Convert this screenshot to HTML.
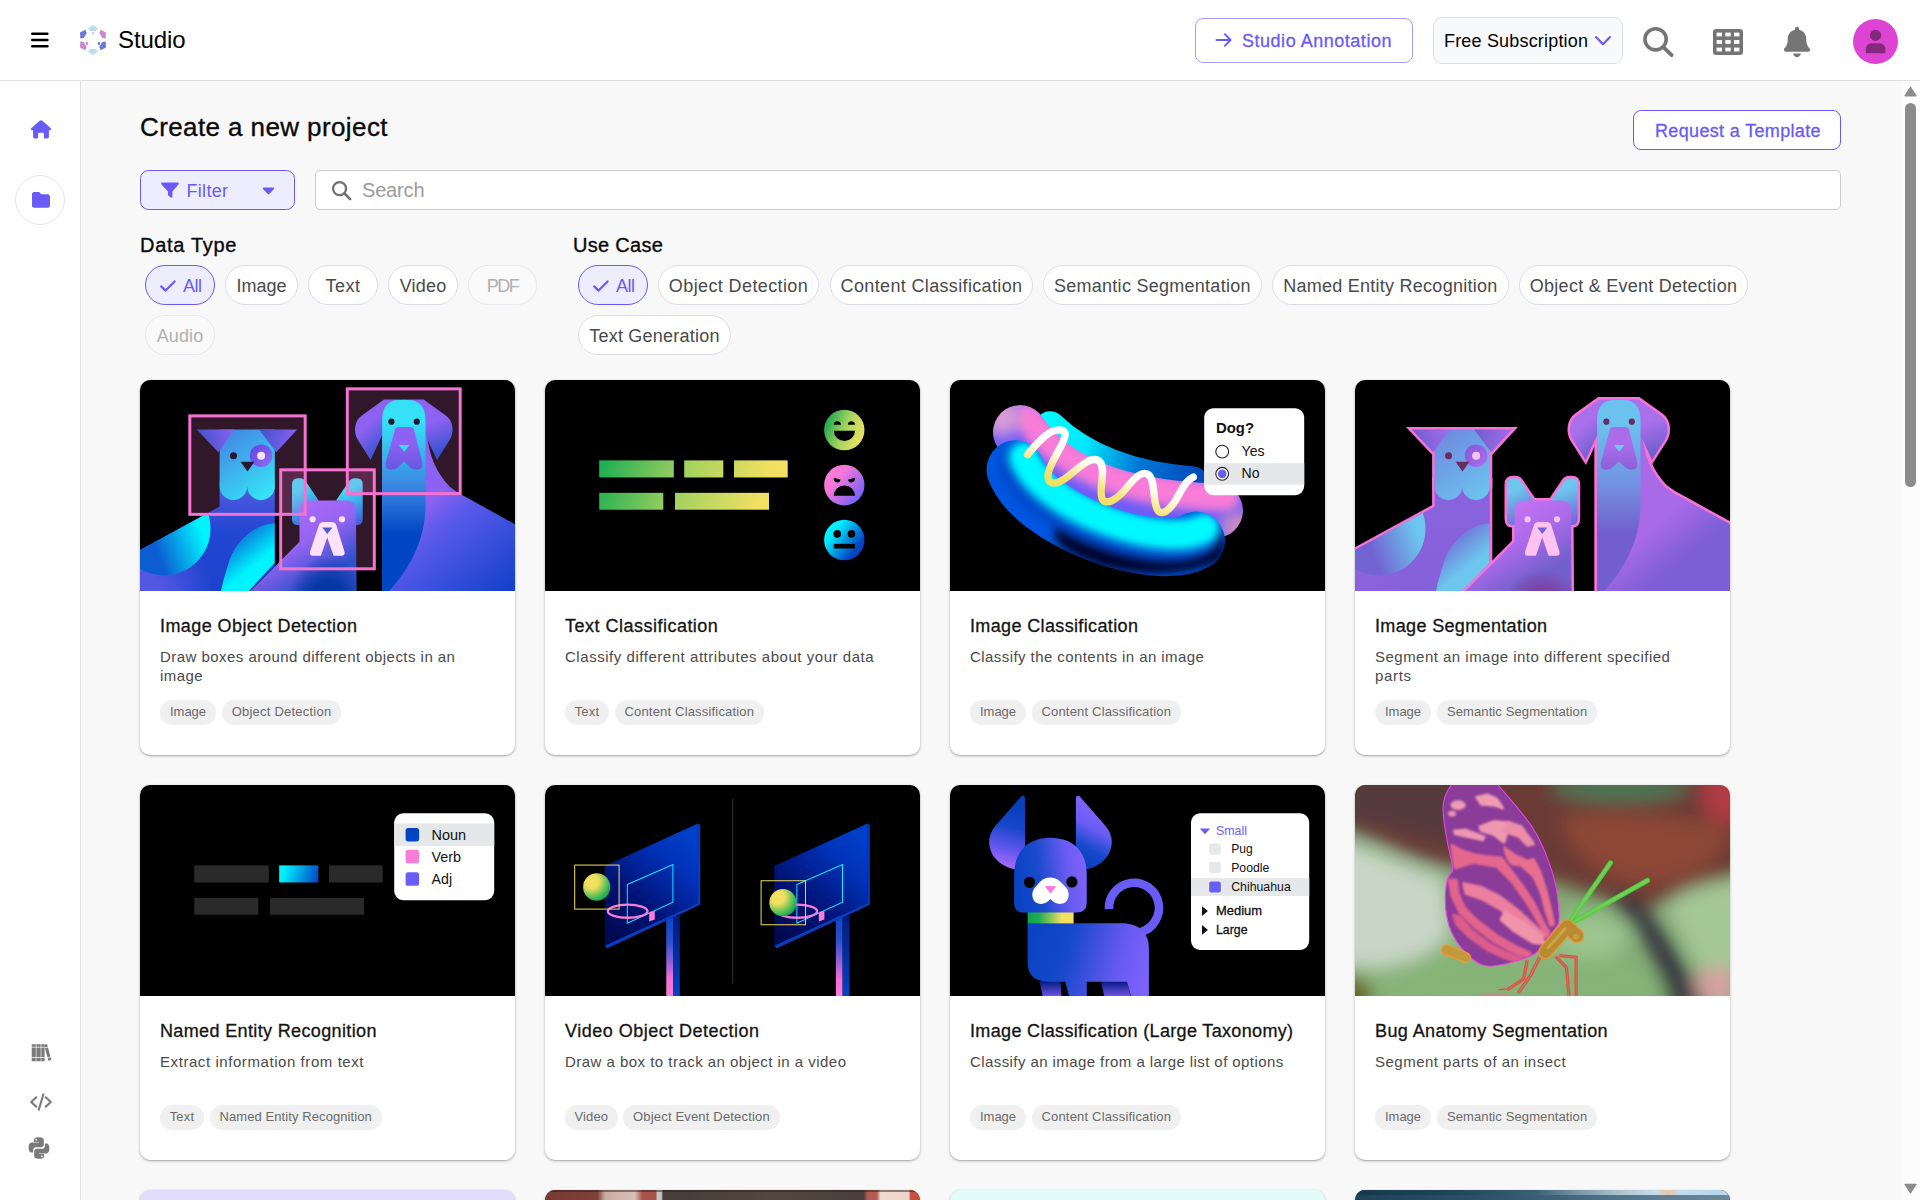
<!DOCTYPE html>
<html lang="en">
<head>
<meta charset="utf-8">
<title>Studio - Create a new project</title>
<style>
*{box-sizing:border-box;margin:0;padding:0}
html,body{width:1920px;height:1200px;overflow:hidden;background:#f8f8f8;font-family:"Liberation Sans",sans-serif;color:#111}
.abs{position:absolute}
.t{position:absolute;white-space:nowrap;line-height:1}
.med{-webkit-text-stroke:0.35px currentColor}
#hdr{position:absolute;left:0;top:0;width:1920px;height:81px;background:#fff;border-bottom:1px solid #e0e0e0;z-index:5}
#side{position:absolute;left:0;top:81px;width:81px;height:1119px;background:#fff;border-right:1px solid #e0e0e0;z-index:4}
#main{position:absolute;left:0;top:0;width:1920px;height:1200px;overflow:hidden}
.btn{position:absolute;border-radius:8px}
.chip{position:absolute;height:40px;border-radius:20px;border:1px solid #dcdce8;background:#fff;color:#4a4a4a;font-size:18px;line-height:40px;text-align:center;white-space:nowrap}
.chip.sel{border-color:#6a5af5;background:#eeedfe;color:#6a5af5}
.chip.dis{border-color:#e8e8ee;background:#fafafa;color:#b0b0b0}
.card{position:absolute;width:375px;height:375px;background:#fff;border-radius:10px;box-shadow:0 1px 3px rgba(0,0,0,.28),0 1px 1px rgba(0,0,0,.10);overflow:hidden}
.card svg.ill{position:absolute;left:0;top:0;width:375px;height:211px;display:block}
.card .ttl{position:absolute;left:20px;top:236px;font-size:18px;line-height:20px;color:#141414;white-space:nowrap;-webkit-text-stroke:0.3px currentColor}
.card .dsc{position:absolute;left:20px;top:267px;font-size:15px;line-height:19px;color:#4a4a4a;white-space:nowrap}
.card .tags{position:absolute;left:20px;top:320px;height:24.500px;white-space:nowrap;font-size:0}
.tag{display:inline-block;height:24.500px;line-height:24.500px;border-radius:12.250px;background:#f0f0f0;color:#6a6a6a;font-size:13px;margin-right:5.700px;text-align:center;vertical-align:top}
.pop text{font-family:"Liberation Sans",sans-serif}
</style>
</head>
<body>
<div id="main">
<!-- HEADER -->
<div id="hdr">
  <svg class="abs" style="left:30px;top:31px" width="20" height="18" viewBox="0 0 20 18"><g fill="#000"><rect x="1" y="1.6" width="17.6" height="2.4" rx="1.2"/><rect x="1" y="7.8" width="17.6" height="2.4" rx="1.2"/><rect x="1" y="14" width="17.6" height="2.4" rx="1.2"/></g></svg>
  <!-- logo -->
  <svg class="abs" style="left:78px;top:24px" width="30" height="32" viewBox="-15 -16 30 32">
    <g id="lg">
      <path d="M0,-15 L5,-11.8 L3,-9 L-3,-9 L-5,-11.8 Z" fill="#b9def2"/>
      <circle cx="0" cy="-6.6" r="1.3" fill="#b9def2"/>
    </g>
    <g transform="rotate(60)"><path d="M0,-15 L5,-11.8 L3,-9 L-3,-9 L-5,-11.8 Z" fill="#c98acd"/></g>
    <g transform="rotate(120)"><path d="M0,-15 L5,-11.8 L3,-9 L-3,-9 L-5,-11.8 Z" fill="#6b79d9"/><circle cx="0" cy="-6.9" r="1.4" fill="#6b79d9"/></g>
    <g transform="rotate(180)"><path d="M0,-15 L5,-11.8 L3,-9 L-3,-9 L-5,-11.8 Z" fill="#b9def2"/></g>
    <g transform="rotate(240)"><path d="M0,-15 L5,-11.8 L3,-9 L-3,-9 L-5,-11.8 Z" fill="#c98acd"/><circle cx="0" cy="-6.9" r="1.4" fill="#c98acd"/></g>
    <g transform="rotate(300)"><path d="M0,-15 L5,-11.8 L3,-9 L-3,-9 L-5,-11.8 Z" fill="#6b79d9"/></g>
  </svg>
  <span class="t" style="letter-spacing:-0.11px;left:118px;top:27.5px;font-size:24px;color:#000">Studio</span>

  <!-- Studio Annotation -->
  <div class="btn" style="left:1195px;top:18px;width:218px;height:45px;border:1px solid #a69df9;background:#fff"></div>
  <svg class="abs" style="left:1215px;top:32px" width="18" height="16" viewBox="0 0 18 16"><path d="M1.5 8 H15.5 M9.8 2.2 L15.6 8 L9.8 13.8" fill="none" stroke="#6a5af5" stroke-width="1.9" stroke-linecap="round" stroke-linejoin="round"/></svg>
  <span class="t" style="letter-spacing:0.52px;left:1242px;top:32px;font-size:18px;color:#6a5af5;-webkit-text-stroke:0.3px #6a5af5">Studio Annotation</span>

  <!-- Free Subscription -->
  <div class="btn" style="left:1433px;top:17px;width:190px;height:47px;border:1px solid #dedfe3;background:#f8f9fb;border-radius:9px"></div>
  <span class="t" style="letter-spacing:0.18px;left:1444px;top:32px;font-size:18px;color:#000">Free Subscription</span>
  <svg class="abs" style="left:1594px;top:34px" width="18" height="14" viewBox="0 0 18 14"><path d="M2 3 L9 10.2 L16 3" fill="none" stroke="#6a5af5" stroke-width="2.1" stroke-linecap="round" stroke-linejoin="round"/></svg>

  <!-- search -->
  <svg class="abs" style="left:1641px;top:25px" width="34" height="34" viewBox="0 0 34 34"><circle cx="14.6" cy="14.3" r="10.6" fill="none" stroke="#757575" stroke-width="3.6"/><path d="M22.6 22.4 L30.6 30.2" stroke="#757575" stroke-width="3.8" stroke-linecap="round"/></svg>
  <!-- grid -->
  <svg class="abs" style="left:1713px;top:29px" width="30" height="26" viewBox="0 0 30 26"><rect x="0" y="0" width="30" height="26" rx="3.2" fill="#757575"/><g fill="#fff"><rect x="3.6" y="3.6" width="5.4" height="3.8"/><rect x="12.3" y="3.6" width="5.4" height="3.8"/><rect x="21" y="3.6" width="5.4" height="3.8"/><rect x="3.6" y="11.1" width="5.4" height="3.8"/><rect x="12.3" y="11.1" width="5.4" height="3.8"/><rect x="21" y="11.1" width="5.4" height="3.8"/><rect x="3.6" y="18.6" width="5.4" height="3.8"/><rect x="12.3" y="18.6" width="5.4" height="3.8"/><rect x="21" y="18.6" width="5.4" height="3.8"/></g></svg>
  <!-- bell -->
  <svg class="abs" style="left:1783px;top:26px" width="28" height="32" viewBox="0 0 28 32"><path fill="#757575" d="M14 0.8c1.1 0 2 .9 2 2v.9c4.3.9 7.3 4.700 7.300 9.300v1.400c0 2.800 1 5.500 2.900 7.600l.5.500c.5.600.6 1.400.3 2.100s-1 1.100-1.800 1.100H2.800c-.8 0-1.500-.400-1.800-1.100s-.2-1.500.3-2.100l.5-.5c1.900-2.100 2.900-4.800 2.900-7.600V13c0-4.600 3-8.400 7.300-9.300v-.9c0-1.100.9-2 2-2zM17.800 27.600c-.1 2-1.800 3.600-3.800 3.600s-3.700-1.600-3.800-3.600z"/></svg>
  <!-- avatar -->
  <div class="abs" style="left:1853px;top:19px;width:45px;height:45px;border-radius:50%;background:#dd44d4"></div>
  <svg class="abs" style="left:1864px;top:29px" width="23" height="25" viewBox="0 0 23 25"><circle cx="11.6" cy="6.4" r="5.6" fill="#85297f"/><path d="M1.800 23.200v-3.200c0-3.200 2.600-5.800 5.800-5.800h8c3.200 0 5.800 2.600 5.800 5.800v3.200c0 .600-.4 1-1 1H2.800c-.6 0-1-.4-1-1z" fill="#85297f"/></svg>
</div>

<!-- SIDEBAR -->
<div id="side">
  <!-- home -->
  <svg class="abs" style="left:30px;top:39px" width="22" height="19" viewBox="0 0 22 19"><path fill="#6a5af8" d="M11 0.300c.5 0 1 .2 1.300.5l8.300 7.300c.6.500.6 1.300.1 1.800-.3.300-.6.400-1 .4h-.8v6.500c0 .9-.7 1.600-1.600 1.600h-2.600c-.5 0-.8-.4-.8-.8v-3.800c0-.6-.4-1-1-1h-3.800c-.6 0-1 .4-1 1v3.800c0 .5-.4.8-.8.8H4.700c-.9 0-1.600-.7-1.600-1.600v-6.500h-.8c-.8 0-1.300-.6-1.300-1.300 0-.4.200-.7.500-1L9.700.8c.4-.3.800-.5 1.300-.5z"/></svg>
  <!-- folder -->
  <div class="abs" style="left:15px;top:94px;width:50px;height:50px;border-radius:50%;border:1px solid #e3e3e3;background:#fff"></div>
  <svg class="abs" style="left:31px;top:110px" width="20" height="18" viewBox="0 0 20 18"><path fill="#6a5af8" d="M3 1h4.400c.7 0 1.300.3 1.700.8l.9 1.100c.2.200.4.300.7.300h6c1.300 0 2.300 1 2.300 2.300v8.900c0 1.300-1 2.300-2.300 2.300H3.300c-1.300 0-2.300-1-2.300-2.300V3.300C1 2 1.800 1 3 1z"/></svg>
  <!-- books -->
  <svg class="abs" style="left:31px;top:962px" width="20" height="20" viewBox="0 0 20 20"><g fill="#7a7a7a"><path d="M0.700 1.200h4.100v2.500H0.700zM0.700 4.500h4.100v9.800H0.700zM0.700 15.100h4.100v3.200H0.700z"/><path d="M5.400 1.200h4.300v2.500H5.400zM5.400 4.500h4.300v9.800H5.400zM5.400 15.100h4.300v3.200H5.400z"/><path d="M10.300 1.200h3.300v2.500h-3.300zM10.300 4.500h3.300v9.800h-3.300zM10.300 15.100h3.300v3.200h-3.300z"/><path d="M13.100 1.900l3-.8.700 2.600-3 .8zM14 5.300l3-.8 2.400 9-3 .8zM16.600 15.100l3-.8.700 2.700-3 .8z"/></g></svg>
  <!-- code -->
  <svg class="abs" style="left:28px;top:1010px" width="26" height="22" viewBox="0 0 26 22"><path d="M8.300 6.300 L3.200 11 L8.300 15.700 M17.700 6.300 L22.800 11 L17.700 15.700 M15.400 3.200 L10.800 18.800" fill="none" stroke="#7a7a7a" stroke-width="2.100" stroke-linecap="round" stroke-linejoin="round"/></svg>
  <!-- python -->
  <svg class="abs" style="left:27px;top:1055px" width="24" height="24" viewBox="0 0 24 24"><g fill="#7a7a7a"><path d="M11.900 1.200c-5.200 0-4.900 2.300-4.900 2.300v2.400h5v.7H5s-3.400-.4-3.400 4.900 2.900 5.100 2.900 5.100h1.700v-2.500s-.1-2.900 2.900-2.900h4.900s2.800 0 2.800-2.700V4s.4-2.800-4.900-2.800zM9.200 2.800c.5 0 .9.400.9.900s-.4.900-.9.900-.9-.4-.9-.9.400-.9.900-.9z"/><path d="M12.100 22.800c5.200 0 4.900-2.300 4.900-2.300v-2.400h-5v-.7h7s3.400.4 3.400-4.900-2.900-5.100-2.900-5.100h-1.700v2.500s.1 2.900-2.900 2.900H10s-2.800 0-2.800 2.700V20s-.4 2.800 4.900 2.800zM14.800 21.200c-.5 0-.9-.4-.9-.9s.4-.9.900-.9.900.4.900.9-.4.900-.9.900z"/></g></svg>
</div>

<!-- SCROLLBAR -->
<div class="abs" style="left:1901px;top:81px;width:19px;height:1119px;background:#fcfcfc;z-index:6"></div>
<svg class="abs" style="left:1901px;top:81px;z-index:7" width="19" height="1119" viewBox="0 0 19 1119">
  <path d="M9.500 5.200 L15.600 14.600 Q16 15.400 15 15.400 H4 Q3 15.400 3.400 14.600 Z" fill="#8b8b8b"/>
  <rect x="4" y="22" width="11" height="384" rx="5.500" fill="#8b8b8b"/>
  <path d="M9.500 1113 L15.600 1103.600 Q16 1102.800 15 1102.800 H4 Q3 1102.800 3.400 1103.600 Z" fill="#8b8b8b"/>
</svg>
<!-- TITLE ROW -->
<span class="t med" style="letter-spacing:0.4px;left:140px;top:114px;font-size:26px;color:#0a0a0a">Create a new project</span>
<div class="btn" style="left:1633px;top:110px;width:208px;height:40px;border:1px solid #6a5af5;background:#fff"></div>
<span class="t" style="letter-spacing:0.34px;left:1655px;top:122px;font-size:18px;color:#6a5af5;-webkit-text-stroke:0.3px #6a5af5">Request a Template</span>

<!-- FILTER + SEARCH -->
<div class="btn" style="left:140px;top:170px;width:155px;height:40px;border:1px solid #6a5af5;background:#eeedfe;border-radius:8.500px"></div>
<svg class="abs" style="left:161px;top:182px" width="18" height="16" viewBox="0 0 18 16"><path fill="#6a5af5" d="M1.200 0.600h15.600c.9 0 1.300 1 .8 1.700l-6.200 7.100v5.300c0 .8-.9 1.200-1.500.7l-2.500-2c-.3-.2-.4-.5-.4-.9V9.400L.4 2.300C-.1 1.600.3.600 1.200.6z"/></svg>
<span class="t" style="letter-spacing:0.3px;left:186.500px;top:182px;font-size:18px;color:#6a5af5">Filter</span>
<svg class="abs" style="left:262px;top:187px" width="13" height="8" viewBox="0 0 13 8"><path fill="#6a5af5" d="M1.600 0.500h9.800c.8 0 1.100.9.600 1.400L7.200 6.900c-.4.400-1 .4-1.400 0L1 1.900C.5 1.400.8.500 1.600.5z"/></svg>

<div class="abs" style="left:315px;top:170px;width:1526px;height:40px;border:1px solid #cbcbcb;background:#fff;border-radius:5px"></div>
<svg class="abs" style="left:331px;top:180px" width="21" height="21" viewBox="0 0 21 21"><circle cx="8.600" cy="8.600" r="6.500" fill="none" stroke="#6f6f6f" stroke-width="2.300"/><path d="M13.500 13.500 L19.200 19.200" stroke="#6f6f6f" stroke-width="2.500" stroke-linecap="round"/></svg>
<span class="t" style="letter-spacing:-0.17px;left:362px;top:180px;font-size:20px;color:#9c9c9c">Search</span>

<!-- DATA TYPE -->
<span class="t med" style="letter-spacing:0.71px;left:140px;top:235px;font-size:20px;color:#0a0a0a">Data Type</span>
<div class="chip sel" style="left:145px;top:265px;width:70px"></div>
<svg class="abs" style="left:159px;top:279px" width="18" height="14" viewBox="0 0 18 14"><path d="M2.200 7.400 L6.600 11.600 L15.600 2.400" fill="none" stroke="#6a5af5" stroke-width="2.200" stroke-linecap="round" stroke-linejoin="round"/></svg>
<span class="t" style="letter-spacing:-0.51px;left:183px;top:277px;font-size:18px;color:#6a5af5">All</span>
<div class="chip" style="left:225px;top:265px;width:73px"><span style="letter-spacing:-0.01px;">Image</span></div>
<div class="chip" style="left:308px;top:265px;width:70px"><span style="letter-spacing:0.49px;">Text</span></div>
<div class="chip" style="left:388px;top:265px;width:70px"><span style="letter-spacing:0.2px;">Video</span></div>
<div class="chip dis" style="left:468px;top:265px;width:69px"><span style="letter-spacing:-1.5px;">PDF</span></div>
<div class="chip dis" style="left:145px;top:315px;width:70px"><span style="letter-spacing:0.11px;">Audio</span></div>

<!-- USE CASE -->
<span class="t med" style="letter-spacing:0.31px;left:573px;top:235px;font-size:20px;color:#0a0a0a">Use Case</span>
<div class="chip sel" style="left:578px;top:265px;width:70px"></div>
<svg class="abs" style="left:592px;top:279px" width="18" height="14" viewBox="0 0 18 14"><path d="M2.200 7.400 L6.600 11.600 L15.600 2.400" fill="none" stroke="#6a5af5" stroke-width="2.200" stroke-linecap="round" stroke-linejoin="round"/></svg>
<span class="t" style="letter-spacing:-0.51px;left:616px;top:277px;font-size:18px;color:#6a5af5">All</span>
<div class="chip" style="left:658px;top:265px;width:161px"><span style="letter-spacing:0.39px;">Object Detection</span></div>
<div class="chip" style="left:830px;top:265px;width:203px"><span style="letter-spacing:0.35px;">Content Classification</span></div>
<div class="chip" style="left:1043px;top:265px;width:218.700px"><span style="letter-spacing:0.27px;">Semantic Segmentation</span></div>
<div class="chip" style="left:1272px;top:265px;width:236.700px"><span style="letter-spacing:0.26px;">Named Entity Recognition</span></div>
<div class="chip" style="left:1519px;top:265px;width:229px"><span style="letter-spacing:0.26px;">Object &amp; Event Detection</span></div>
<div class="chip" style="left:578px;top:315px;width:153px"><span style="letter-spacing:0.24px;">Text Generation</span></div>
<!-- CARD 1 -->
<div class="card" style="left:140px;top:380px">
<svg class="ill" viewBox="0 0 375 210" preserveAspectRatio="none"><rect width="375" height="210" fill="#000"/><defs>
<linearGradient id="alh" gradientUnits="userSpaceOnUse" x1="85" y1="55" x2="132" y2="118"><stop offset="0" stop-color="#4488e4"/><stop offset="1" stop-color="#34eaf9"/></linearGradient>
<linearGradient id="ale1" gradientUnits="userSpaceOnUse" x1="58" y1="60" x2="94" y2="50"><stop offset="0" stop-color="#3f52c8"/><stop offset="1" stop-color="#8b62f2"/></linearGradient>
<linearGradient id="ale2" gradientUnits="userSpaceOnUse" x1="120" y1="50" x2="156" y2="60"><stop offset="0" stop-color="#3f52c8"/><stop offset="1" stop-color="#8b62f2"/></linearGradient>
<linearGradient id="alb" gradientUnits="userSpaceOnUse" x1="100" y1="100" x2="100" y2="210"><stop offset="0" stop-color="#5c5ee2"/><stop offset="0.45" stop-color="#2247d2"/><stop offset="1" stop-color="#1c41cc"/></linearGradient>
<linearGradient id="alc" gradientUnits="userSpaceOnUse" x1="10" y1="180" x2="69" y2="158"><stop offset="0" stop-color="#0c5cd2"/><stop offset="0.15" stop-color="#0c5cd2"/><stop offset="0.93" stop-color="#00f4ff"/><stop offset="1" stop-color="#00f4ff"/></linearGradient>
<linearGradient id="all" gradientUnits="userSpaceOnUse" x1="95" y1="150" x2="126" y2="188"><stop offset="0" stop-color="#0c5cd2"/><stop offset="0.8" stop-color="#00f4ff"/><stop offset="1" stop-color="#00f4ff"/></linearGradient>
<linearGradient id="alr" gradientUnits="userSpaceOnUse" x1="112" y1="68" x2="130" y2="84"><stop offset="0" stop-color="#6248e6"/><stop offset="1" stop-color="#8d6af2"/></linearGradient>
<linearGradient id="ase1" gradientUnits="userSpaceOnUse" x1="154" y1="100" x2="176" y2="140"><stop offset="0" stop-color="#3fdcf6"/><stop offset="0.25" stop-color="#3fdcf6"/><stop offset="1" stop-color="#4560d8"/></linearGradient>
<linearGradient id="ase2" gradientUnits="userSpaceOnUse" x1="208" y1="100" x2="224" y2="140"><stop offset="0" stop-color="#3fdcf6"/><stop offset="0.2" stop-color="#3fdcf6"/><stop offset="1" stop-color="#4560d8"/></linearGradient>
<linearGradient id="asb" gradientUnits="userSpaceOnUse" x1="165" y1="122" x2="215" y2="205"><stop offset="0" stop-color="#ab6af8"/><stop offset="0.35" stop-color="#9464f2"/><stop offset="0.75" stop-color="#3350cc"/><stop offset="1" stop-color="#3350cc"/></linearGradient>
<radialGradient id="asd" gradientUnits="userSpaceOnUse" cx="188" cy="216" r="40"><stop offset="0" stop-color="#0638a4"/><stop offset="0.4" stop-color="#0638a4"/><stop offset="1" stop-color="#0638a400"/></radialGradient>
<linearGradient id="arh" gradientUnits="userSpaceOnUse" x1="260" y1="20" x2="260" y2="210"><stop offset="0" stop-color="#36e0f6"/><stop offset="0.12" stop-color="#36e0f6"/><stop offset="0.45" stop-color="#3a86e2"/><stop offset="0.7" stop-color="#0046c4"/><stop offset="1" stop-color="#0046c4"/></linearGradient>
<linearGradient id="are1" gradientUnits="userSpaceOnUse" x1="216" y1="40" x2="244" y2="70"><stop offset="0" stop-color="#8b62f2"/><stop offset="0.3" stop-color="#8b62f2"/><stop offset="1" stop-color="#3452cc"/></linearGradient>
<linearGradient id="are2" gradientUnits="userSpaceOnUse" x1="290" y1="28" x2="306" y2="72"><stop offset="0" stop-color="#8b62f2"/><stop offset="0.3" stop-color="#8b62f2"/><stop offset="1" stop-color="#3452cc"/></linearGradient>
<linearGradient id="arm" gradientUnits="userSpaceOnUse" x1="264" y1="47" x2="264" y2="90"><stop offset="0" stop-color="#8b62f2"/><stop offset="0.4" stop-color="#8b62f2"/><stop offset="1" stop-color="#6456e0"/></linearGradient>
<linearGradient id="arb" gradientUnits="userSpaceOnUse" x1="288" y1="100" x2="375" y2="205"><stop offset="0" stop-color="#8c62f2"/><stop offset="0.12" stop-color="#8c62f2"/><stop offset="0.32" stop-color="#5c5aea"/><stop offset="0.62" stop-color="#3a50dc"/><stop offset="1" stop-color="#1440cc"/></linearGradient>
<radialGradient id="albo" gradientUnits="userSpaceOnUse" cx="-5" cy="218" r="80"><stop offset="0" stop-color="#5258e2"/><stop offset="0.35" stop-color="#5258e2"/><stop offset="1" stop-color="#5258e200"/></radialGradient>
<clipPath id="albc"><path d="M0,169.3 L79.6,126 L79.6,100 L134.8,100 L134.8,185.5 L110.3,210 L0,210 Z"/></clipPath>
<clipPath id="asbc"><path d="M159.5,131 Q159.5,120 170.5,120 L205,120 Q216,120 216,131 L216.5,210 L110.5,210 L159.5,161 Z"/></clipPath>
</defs><rect x="140.7" y="89.4" width="93.6" height="98.5" fill="rgba(244,114,208,0.2)"/><path d="M152,104 Q152,97.800 158,97.800 L160.5,97.800 Q163.6,97.800 165.3,100.3 L178,119 L178,144.5 L158.5,144.5 Q152,144.5 152,138 Z" fill="url(#ase1)"/><path d="M222.7,104 Q222.7,97.800 216.7,97.800 L214.2,97.800 Q211.1,97.800 209.4,100.3 L196.7,119 L196.7,144.5 L216.2,144.5 Q222.7,144.5 222.7,138 Z" fill="url(#ase2)"/>
<path d="M159.5,131 Q159.5,120 170.5,120 L205,120 Q216,120 216,131 L216.5,210 L110.5,210 L159.5,161 Z" fill="url(#asb)"/>
<g clip-path="url(#asbc)"><circle cx="188" cy="216" r="40" fill="url(#asd)"/></g>
<path d="M183.5,141.4 L191.7,141.4 Q195.5,141.4 196.5,145 L204.5,171 Q205.3,175 201.5,175 L193.6,175 L187.2,156.7 L180.9,175 L173,175 Q169.2,175 170,171 L178.7,145 Q179.7,141.4 183.5,141.4 Z" fill="#fde2fa"/>
<path d="M182.3,146.7 L192.4,146.7 L187.3,153.2 Z" fill="#4a58d8"/>
<circle cx="172.6" cy="138.6" r="3.1" fill="#fde2fa"/><circle cx="202" cy="138.6" r="3.1" fill="#fde2fa"/><rect x="49.8" y="35.7" width="115.4" height="98" fill="rgba(244,114,208,0.2)"/><path d="M0,169.3 L79.6,126 L79.6,100 L134.8,100 L134.8,185.5 L110.3,210 L0,210 Z" fill="url(#alb)"/>
<g clip-path="url(#albc)"><circle cx="-5" cy="218" r="80" fill="url(#albo)"/><circle cx="24" cy="148" r="46.5" fill="url(#alc)"/><path d="M134.8,142.5 C115,143 97,160 90,178 C86,190 83,200 81,210 L108.8,210 L134.8,181.8 Z" fill="url(#all)"/></g>
<path d="M79.6,49.2 H134.8 V105.8 A13.8,13.8 0 0 1 107.2,105.8 A13.8,13.8 0 0 1 79.6,105.8 Z" fill="url(#alh)"/>
<path d="M56.7,49.2 L94.2,49.2 L78.3,72 Z" fill="url(#ale1)"/><path d="M119,49.2 L157.2,49.2 L136.2,72 Z" fill="url(#ale2)"/>
<circle cx="121.1" cy="75.4" r="11.3" fill="url(#alr)"/><circle cx="121.1" cy="75.4" r="4" fill="#fde2fa"/>
<circle cx="93.5" cy="75.4" r="3.5" fill="#2b1631"/><path d="M100.6,81.4 L114.4,81.4 L107.5,91 Z" fill="#2b1631"/><rect x="207.3" y="8.8" width="112.9" height="104.3" fill="rgba(244,114,208,0.2)"/><path d="M242,58 L287,54 C289,75 296,92 310,106.5 Q318,113 327.6,117.5 L375,143.5 L375,210 L242,210 Z" fill="url(#arb)"/>
<path d="M264,19.5 L244,19.5 L221.5,35.5 C214,41 213.5,52 217.5,59 L230.6,79.5 L242.1,55 L264,40 Z" fill="url(#are1)"/><path d="M263,19.5 L283.6,19.5 L306.1,35.5 C313.6,41 314.1,52 310.1,59 L297,79.5 L285.5,55 L263,40 Z" fill="url(#are2)"/>
<path d="M242.1,40 C242.1,26 249,20 259,20 L268.6,20 C278.6,20 285.5,26 285.5,40 L285.5,125 C285.5,160 268,190 248.8,210 L242.1,210 Z" fill="url(#arh)"/>
<path d="M258.5,46.9 L270.5,46.9 Q273.5,46.9 274.2,50 L282.3,82 Q283.5,88.5 277.5,89.3 Q273,89.5 270.5,87 L264,81 L257.5,87 Q255,89.5 250.5,89.3 Q244.5,88.5 245.8,82 L254.8,50 Q255.5,46.9 258.5,46.9 Z" fill="url(#arm)"/>
<path d="M258.9,64.8 L269.4,64.800 L264.2,71.4 Z" fill="#2fe2f8"/>
<circle cx="251.4" cy="41.5" r="3.1" fill="#2b1631"/><circle cx="276.800" cy="41.5" r="3.1" fill="#2b1631"/><g fill="none" stroke="#f472d0" stroke-width="3"><rect x="49.8" y="35.7" width="115.4" height="98"/><rect x="207.3" y="8.8" width="112.9" height="104.3"/><rect x="140.7" y="89.4" width="93.6" height="98.5"/></g></svg>
<span class="ttl" style="letter-spacing:0.42px;">Image Object Detection</span>
<span class="dsc" style="letter-spacing:0.46px;top:267px">Draw boxes around different objects in an</span>
<span class="dsc" style="letter-spacing:0.41px;top:286px">image</span>
<div class="tags"><span class="tag" style="width:56px"><span style="letter-spacing:-0.04px;">Image</span></span><span class="tag" style="width:119.7px"><span style="letter-spacing:0.23px;">Object Detection</span></span></div>
</div>
<!-- CARD 2 -->
<div class="card" style="left:545px;top:380px">
<svg class="ill" viewBox="0 0 375 210" preserveAspectRatio="none"><rect width="375" height="210" fill="#000"/><defs><linearGradient id="b_g" gradientUnits="userSpaceOnUse" x1="54" y1="75" x2="243" y2="135"><stop offset="0" stop-color="#18ac52"/><stop offset="0.45" stop-color="#a6d260"/><stop offset="0.85" stop-color="#f2e062"/><stop offset="1" stop-color="#f2e062"/></linearGradient><linearGradient id="b_e1" gradientUnits="userSpaceOnUse" x1="279" y1="42" x2="320" y2="58"><stop offset="0" stop-color="#14a650"/><stop offset="0.5" stop-color="#a6d460"/><stop offset="1" stop-color="#f6e464"/></linearGradient><linearGradient id="b_e2" gradientUnits="userSpaceOnUse" x1="284" y1="92" x2="316" y2="118"><stop offset="0" stop-color="#fa7ada"/><stop offset="0.25" stop-color="#f878d8"/><stop offset="1" stop-color="#7060fa"/></linearGradient><linearGradient id="b_e3" gradientUnits="userSpaceOnUse" x1="283" y1="146" x2="316" y2="172"><stop offset="0" stop-color="#00f6ff"/><stop offset="0.2" stop-color="#00eaff"/><stop offset="0.85" stop-color="#0044c4"/><stop offset="1" stop-color="#0040c0"/></linearGradient></defs><g fill="url(#b_g)"><rect x="54.2" y="80" width="74.6" height="17"/><rect x="139.2" y="80" width="39.1" height="17"/><rect x="189" y="80" width="53.7" height="17"/><rect x="54.2" y="112.3" width="64.1" height="16.8"/><rect x="130" y="112.3" width="94" height="16.8"/></g><circle cx="299.3" cy="49.8" r="20.2" fill="url(#b_e1)"/><path d="M288.7,44.6 a3.6,3.6 0 0 1 7.2,0 Z M302.8,44.6 a3.6,3.6 0 0 1 7.2,0 Z M288.8,50.6 h21.2 a10.6,10 0 0 1 -21.2,0 Z" fill="#000"/><circle cx="299.3" cy="104.6" r="20.2" fill="url(#b_e2)"/><path d="M288.9,97.4 L295.7,99.3 a3.500,3.500 0 0 1 -6.800,-1.900 Z M309.7,97.4 L302.9,99.3 a3.500,3.500 0 0 0 6.800,-1.900 Z M288.8,115.3 a10.6,10.300 0 0 1 21.2,0 Z" fill="#000"/><circle cx="299.3" cy="159.3" r="20.2" fill="url(#b_e3)"/><circle cx="292.2" cy="153.2" r="3.800" fill="#000"/><circle cx="306.4" cy="153.2" r="3.800" fill="#000"/><rect x="288.8" y="163.1" width="21.2" height="4.600" fill="#000"/></svg>
<span class="ttl" style="letter-spacing:0.49px;">Text Classification</span>
<span class="dsc" style="letter-spacing:0.54px;top:267px">Classify different attributes about your data</span>
<div class="tags"><span class="tag" style="width:44px"><span style="letter-spacing:0.22px;">Text</span></span><span class="tag" style="width:149.3px"><span style="letter-spacing:0.18px;">Content Classification</span></span></div>
</div>
<!-- CARD 3 -->
<div class="card" style="left:950px;top:380px">
<svg class="ill" viewBox="0 0 375 210" preserveAspectRatio="none"><rect width="375" height="210" fill="#000"/><defs><linearGradient id="c_bk" gradientUnits="userSpaceOnUse" x1="95" y1="60" x2="250" y2="100"><stop offset="0" stop-color="#00f8ff"/><stop offset="0.25" stop-color="#00e8fa"/><stop offset="0.6" stop-color="#0078d8"/><stop offset="1" stop-color="#0048b8"/></linearGradient><linearGradient id="c_ms" gradientUnits="userSpaceOnUse" x1="141.9" y1="120.5" x2="158.1" y2="79.5"><stop offset="0" stop-color="#f2de62"/><stop offset="0.3" stop-color="#f3e274"/><stop offset="0.72" stop-color="#fffcee"/><stop offset="1" stop-color="#ffffff"/></linearGradient><filter id="c_b3" filterUnits="userSpaceOnUse" x="-20" y="-20" width="415" height="250"><feGaussianBlur stdDeviation="3"/></filter><filter id="c_b5" filterUnits="userSpaceOnUse" x="-20" y="-20" width="415" height="250"><feGaussianBlur stdDeviation="5"/></filter><filter id="c_b7" filterUnits="userSpaceOnUse" x="-20" y="-20" width="415" height="250"><feGaussianBlur stdDeviation="7"/></filter><mask id="c_sm" maskUnits="userSpaceOnUse" x="0" y="0" width="375" height="210"><path d="M70,52 Q120,125 266,130" fill="none" stroke="#fff" stroke-width="54" stroke-linecap="round"/></mask><mask id="c_fm" maskUnits="userSpaceOnUse" x="0" y="0" width="375" height="210"><path d="M65.5,89 C84,139.5 204.5,182.8 246,160" fill="none" stroke="#fff" stroke-width="58" stroke-linecap="round"/></mask></defs><path d="M100,46 Q150,94 243,101" fill="none" stroke="url(#c_bk)" stroke-width="30" stroke-linecap="round"/><g mask="url(#c_sm)"><rect width="375" height="210" fill="#6c5cf6"/><path d="M70,52 Q120,125 266,130" fill="none" stroke="#f87cd8" stroke-width="30" stroke-linecap="round" transform="translate(9,-14)" filter="url(#c_b5)"/><circle cx="52" cy="36" r="20" fill="#d69ad8" filter="url(#c_b7)"/><circle cx="288" cy="148" r="18" fill="#c88ac8" filter="url(#c_b7)"/></g><g mask="url(#c_fm)"><rect width="375" height="210" fill="#0056e0"/><path d="M118,148 C150,170 205,178 250,162" fill="none" stroke="#000620" stroke-width="38" stroke-linecap="round" transform="translate(6,3)" filter="url(#c_b5)"/><path d="M65.5,89 C84,139.5 204.5,182.8 246,160" fill="none" stroke="#0046c8" stroke-width="40" stroke-linecap="round" transform="translate(3,-5)" filter="url(#c_b5)"/><path d="M65.5,89 C84,139.5 204.5,182.8 246,160" fill="none" stroke="#00f8ff" stroke-width="30" stroke-linecap="round" transform="translate(8,-12)" filter="url(#c_b5)"/><path d="M65.5,89 C84,139.5 204.5,182.8 246,160" fill="none" stroke="#00f8ff" stroke-width="18" stroke-linecap="round" transform="translate(9,-14)" filter="url(#c_b3)"/></g><path d="M77.5,74.2 C88,62 100,47 112,50 C124,53 98,82 98,95 C98,106 108,104 118,96 C128,88 140,76 148,80 C158,85 148,108 152,118 C156,126 168,118 176,108 C184,98 192,90 198,94 C206,99 202,122 208,130 C214,137 224,124 230,112 C235,103 238,99 243.3,96.7" fill="none" stroke="url(#c_ms)" stroke-width="7.400" stroke-linecap="round" stroke-linejoin="round"/><g class="pop"><rect x="254.2" y="28.1" width="100" height="86.5" rx="9" fill="#fff"/><rect x="254.2" y="82.800" width="100" height="21.400" fill="#e6e7e9"/><text x="266" y="52.6" font-size="15.500" font-weight="bold" fill="#111" textLength="38" lengthAdjust="spacingAndGlyphs">Dog?</text><circle cx="272.2" cy="71.3" r="6.400" fill="#fff" stroke="#222" stroke-width="1.100"/><circle cx="272.2" cy="93.4" r="6.400" fill="#fff" stroke="#222" stroke-width="1.100"/><circle cx="272.2" cy="93.4" r="4.300" fill="#6a5cf6"/><text x="291.6" y="75.6" font-size="14" fill="#111" textLength="23" lengthAdjust="spacingAndGlyphs">Yes</text><text x="291.6" y="98" font-size="14" fill="#111" textLength="18" lengthAdjust="spacingAndGlyphs">No</text></g></svg>
<span class="ttl" style="letter-spacing:0.36px;">Image Classification</span>
<span class="dsc" style="letter-spacing:0.43px;top:267px">Classify the contents in an image</span>
<div class="tags"><span class="tag" style="width:56px"><span style="letter-spacing:-0.04px;">Image</span></span><span class="tag" style="width:149.3px"><span style="letter-spacing:0.18px;">Content Classification</span></span></div>
</div>
<!-- CARD 4 -->
<div class="card" style="left:1355px;top:380px">
<svg class="ill" viewBox="0 0 375 210" preserveAspectRatio="none"><rect width="375" height="210" fill="#000"/><defs>
<linearGradient id="dlh" gradientUnits="userSpaceOnUse" x1="85" y1="55" x2="132" y2="118"><stop offset="0" stop-color="#6f8ae0"/><stop offset="1" stop-color="#6cc6ee"/></linearGradient>
<linearGradient id="dle1" gradientUnits="userSpaceOnUse" x1="58" y1="60" x2="94" y2="50"><stop offset="0" stop-color="#6e5ecd"/><stop offset="1" stop-color="#a46cea"/></linearGradient>
<linearGradient id="dle2" gradientUnits="userSpaceOnUse" x1="120" y1="50" x2="156" y2="60"><stop offset="0" stop-color="#6e5ecd"/><stop offset="1" stop-color="#a46cea"/></linearGradient>
<linearGradient id="dlb" gradientUnits="userSpaceOnUse" x1="100" y1="100" x2="100" y2="210"><stop offset="0" stop-color="#8a64de"/><stop offset="0.45" stop-color="#8862dc"/><stop offset="1" stop-color="#8460d8"/></linearGradient>
<linearGradient id="dlc" gradientUnits="userSpaceOnUse" x1="10" y1="180" x2="69" y2="158"><stop offset="0" stop-color="#7262d2"/><stop offset="0.15" stop-color="#7262d2"/><stop offset="0.93" stop-color="#6cc6ee"/><stop offset="1" stop-color="#6cc6ee"/></linearGradient>
<linearGradient id="dll" gradientUnits="userSpaceOnUse" x1="95" y1="150" x2="126" y2="188"><stop offset="0" stop-color="#7262d2"/><stop offset="0.8" stop-color="#6cc6ee"/><stop offset="1" stop-color="#6cc6ee"/></linearGradient>
<linearGradient id="dlr" gradientUnits="userSpaceOnUse" x1="112" y1="68" x2="130" y2="84"><stop offset="0" stop-color="#8a58dc"/><stop offset="1" stop-color="#a870ea"/></linearGradient>
<linearGradient id="dse1" gradientUnits="userSpaceOnUse" x1="154" y1="100" x2="176" y2="140"><stop offset="0" stop-color="#6cc6ee"/><stop offset="0.25" stop-color="#6cc6ee"/><stop offset="1" stop-color="#7266d6"/></linearGradient>
<linearGradient id="dse2" gradientUnits="userSpaceOnUse" x1="208" y1="100" x2="224" y2="140"><stop offset="0" stop-color="#6cc6ee"/><stop offset="0.2" stop-color="#6cc6ee"/><stop offset="1" stop-color="#7266d6"/></linearGradient>
<linearGradient id="dsb" gradientUnits="userSpaceOnUse" x1="165" y1="122" x2="215" y2="205"><stop offset="0" stop-color="#c272f2"/><stop offset="0.35" stop-color="#ac6aea"/><stop offset="0.75" stop-color="#7260cc"/><stop offset="1" stop-color="#7260cc"/></linearGradient>
<radialGradient id="dsd" gradientUnits="userSpaceOnUse" cx="188" cy="228" r="40"><stop offset="0" stop-color="#7a3e9e"/><stop offset="0.4" stop-color="#7a3e9e"/><stop offset="1" stop-color="#7a3e9e00"/></radialGradient>
<linearGradient id="drh" gradientUnits="userSpaceOnUse" x1="260" y1="20" x2="260" y2="210"><stop offset="0" stop-color="#6cc2ee"/><stop offset="0.12" stop-color="#6cc2ee"/><stop offset="0.45" stop-color="#7290e0"/><stop offset="0.7" stop-color="#725ecc"/><stop offset="1" stop-color="#725ecc"/></linearGradient>
<linearGradient id="dre1" gradientUnits="userSpaceOnUse" x1="216" y1="40" x2="244" y2="70"><stop offset="0" stop-color="#aa70ec"/><stop offset="0.3" stop-color="#aa70ec"/><stop offset="1" stop-color="#6e5ece"/></linearGradient>
<linearGradient id="dre2" gradientUnits="userSpaceOnUse" x1="290" y1="28" x2="306" y2="72"><stop offset="0" stop-color="#aa70ec"/><stop offset="0.3" stop-color="#aa70ec"/><stop offset="1" stop-color="#6e5ece"/></linearGradient>
<linearGradient id="drm" gradientUnits="userSpaceOnUse" x1="264" y1="47" x2="264" y2="90"><stop offset="0" stop-color="#aa6cea"/><stop offset="0.4" stop-color="#aa6cea"/><stop offset="1" stop-color="#8a60d8"/></linearGradient>
<linearGradient id="drb" gradientUnits="userSpaceOnUse" x1="288" y1="100" x2="375" y2="205"><stop offset="0" stop-color="#a86ae6"/><stop offset="0.12" stop-color="#a86ae6"/><stop offset="0.32" stop-color="#a86ae6"/><stop offset="0.62" stop-color="#7e5ed6"/><stop offset="1" stop-color="#7e5ed6"/></linearGradient>
<radialGradient id="dlbo" gradientUnits="userSpaceOnUse" cx="-5" cy="218" r="80"><stop offset="0" stop-color="#8a62dc"/><stop offset="0.35" stop-color="#8a62dc"/><stop offset="1" stop-color="#8a62dc00"/></radialGradient>
<clipPath id="dlbc"><path d="M0,169.3 L79.6,126 L79.6,100 L134.8,100 L134.8,185.5 L110.3,210 L0,210 Z"/></clipPath>
<clipPath id="dsbc"><path d="M159.5,131 Q159.5,120 170.5,120 L205,120 Q216,120 216,131 L216.5,210 L110.5,210 L159.5,161 Z"/></clipPath>
</defs><g fill="#f872d8" stroke="#f872d8" stroke-width="5" stroke-linejoin="miter" stroke-miterlimit="5"><path d="M0,169.3 L79.6,126 L79.6,100 L134.8,100 L134.8,185.5 L110.3,210 L0,210 Z"/><path d="M79.6,49.2 H134.8 V105.8 A13.8,13.8 0 0 1 107.2,105.8 A13.8,13.8 0 0 1 79.6,105.8 Z"/><path d="M56.7,49.2 L94.2,49.2 L78.3,72 Z"/><path d="M119,49.2 L157.2,49.2 L136.2,72 Z"/></g>
<path d="M0,169.3 L79.6,126 L79.6,100 L134.8,100 L134.8,185.5 L110.3,210 L0,210 Z" fill="url(#dlb)"/>
<g clip-path="url(#dlbc)"><circle cx="-5" cy="218" r="80" fill="url(#dlbo)"/><circle cx="24" cy="148" r="46.5" fill="url(#dlc)"/><path d="M134.8,142.5 C115,143 97,160 90,178 C86,190 83,200 81,210 L108.8,210 L134.8,181.8 Z" fill="url(#dll)"/></g>
<path d="M79.6,49.2 H134.8 V105.8 A13.8,13.8 0 0 1 107.2,105.8 A13.8,13.8 0 0 1 79.6,105.8 Z" fill="url(#dlh)"/>
<path d="M56.7,49.2 L94.2,49.2 L78.3,72 Z" fill="url(#dle1)"/><path d="M119,49.2 L157.2,49.2 L136.2,72 Z" fill="url(#dle2)"/>
<circle cx="121.1" cy="75.4" r="11.3" fill="url(#dlr)"/><circle cx="121.1" cy="75.4" r="4" fill="#fcc2f0"/>
<circle cx="93.5" cy="75.4" r="3.5" fill="#6b2a62"/><path d="M100.6,81.4 L114.4,81.4 L107.5,91 Z" fill="#6b2a62"/><g fill="#f872d8" stroke="#f872d8" stroke-width="5" stroke-linejoin="miter" stroke-miterlimit="5"><path d="M242,58 L287,54 C289,75 296,92 310,106.5 Q318,113 327.6,117.5 L375,143.5 L375,210 L242,210 Z"/><path d="M242.1,40 C242.1,26 249,20 259,20 L268.6,20 C278.6,20 285.5,26 285.5,40 L285.5,125 C285.5,160 268,190 248.8,210 L242.1,210 Z"/><path d="M264,19.5 L244,19.5 L221.5,35.5 C214,41 213.5,52 217.5,59 L230.6,79.5 L242.1,55 L264,40 Z"/><path d="M263,19.5 L283.6,19.5 L306.1,35.5 C313.6,41 314.1,52 310.1,59 L297,79.5 L285.5,55 L263,40 Z"/></g>
<path d="M242,58 L287,54 C289,75 296,92 310,106.5 Q318,113 327.6,117.5 L375,143.5 L375,210 L242,210 Z" fill="url(#drb)"/>
<path d="M264,19.5 L244,19.5 L221.5,35.5 C214,41 213.5,52 217.5,59 L230.6,79.5 L242.1,55 L264,40 Z" fill="url(#dre1)"/><path d="M263,19.5 L283.6,19.5 L306.1,35.5 C313.6,41 314.1,52 310.1,59 L297,79.5 L285.5,55 L263,40 Z" fill="url(#dre2)"/>
<path d="M242.1,40 C242.1,26 249,20 259,20 L268.6,20 C278.6,20 285.5,26 285.5,40 L285.5,125 C285.5,160 268,190 248.8,210 L242.1,210 Z" fill="url(#drh)"/>
<path d="M258.5,46.9 L270.5,46.9 Q273.5,46.9 274.2,50 L282.3,82 Q283.5,88.5 277.5,89.3 Q273,89.5 270.5,87 L264,81 L257.5,87 Q255,89.5 250.5,89.3 Q244.5,88.5 245.8,82 L254.8,50 Q255.5,46.9 258.5,46.9 Z" fill="url(#drm)"/>
<path d="M258.9,64.8 L269.4,64.800 L264.2,71.4 Z" fill="#6ccaf0"/>
<circle cx="251.4" cy="41.5" r="3.1" fill="#6b2a62"/><circle cx="276.800" cy="41.5" r="3.1" fill="#6b2a62"/><g fill="#f872d8" stroke="#f872d8" stroke-width="5" stroke-linejoin="miter" stroke-miterlimit="5"><path d="M159.5,131 Q159.5,120 170.5,120 L205,120 Q216,120 216,131 L216.5,210 L110.5,210 L159.5,161 Z"/><path d="M152,104 Q152,97.800 158,97.800 L160.5,97.800 Q163.6,97.800 165.3,100.3 L178,119 L178,144.5 L158.5,144.5 Q152,144.5 152,138 Z"/><path d="M222.7,104 Q222.7,97.800 216.7,97.800 L214.2,97.800 Q211.1,97.800 209.4,100.3 L196.7,119 L196.7,144.5 L216.2,144.5 Q222.7,144.5 222.7,138 Z"/></g>
<path d="M152,104 Q152,97.800 158,97.800 L160.5,97.800 Q163.6,97.800 165.3,100.3 L178,119 L178,144.5 L158.5,144.5 Q152,144.5 152,138 Z" fill="url(#dse1)"/><path d="M222.7,104 Q222.7,97.800 216.7,97.800 L214.2,97.800 Q211.1,97.800 209.4,100.3 L196.7,119 L196.7,144.5 L216.2,144.5 Q222.7,144.5 222.7,138 Z" fill="url(#dse2)"/>
<path d="M159.5,131 Q159.5,120 170.5,120 L205,120 Q216,120 216,131 L216.5,210 L110.5,210 L159.5,161 Z" fill="url(#dsb)"/>
<g clip-path="url(#dsbc)"><circle cx="188" cy="228" r="40" fill="url(#dsd)"/></g>
<path d="M183.5,141.4 L191.7,141.4 Q195.5,141.4 196.5,145 L204.5,171 Q205.3,175 201.5,175 L193.6,175 L187.2,156.7 L180.9,175 L173,175 Q169.2,175 170,171 L178.7,145 Q179.7,141.4 183.5,141.4 Z" fill="#fcc2f0"/>
<path d="M182.3,146.7 L192.4,146.7 L187.3,153.2 Z" fill="#7462d6"/>
<circle cx="172.6" cy="138.6" r="3.1" fill="#fcc2f0"/><circle cx="202" cy="138.6" r="3.1" fill="#fcc2f0"/></svg>
<span class="ttl" style="letter-spacing:0.35px;">Image Segmentation</span>
<span class="dsc" style="letter-spacing:0.48px;top:267px">Segment an image into different specified</span>
<span class="dsc" style="letter-spacing:0.66px;top:286px">parts</span>
<div class="tags"><span class="tag" style="width:56px"><span style="letter-spacing:-0.04px;">Image</span></span><span class="tag" style="width:160.8px"><span style="letter-spacing:0.11px;">Semantic Segmentation</span></span></div>
</div>
<!-- CARD 5 -->
<div class="card" style="left:140px;top:785px">
<svg class="ill" viewBox="0 0 375 210" preserveAspectRatio="none"><rect width="375" height="210" fill="#000"/><defs><linearGradient id="e_g" gradientUnits="userSpaceOnUse" x1="139" y1="82" x2="178" y2="95"><stop offset="0" stop-color="#00f8ff"/><stop offset="0.15" stop-color="#00eeff"/><stop offset="1" stop-color="#0046c6"/></linearGradient></defs><g fill="#2a2a2a"><rect x="54.2" y="80" width="74.6" height="17"/><rect x="189" y="80" width="53.7" height="17"/><rect x="54.2" y="112.3" width="64.1" height="16.8"/><rect x="130" y="112.3" width="94" height="16.8"/></g><rect x="139.2" y="80" width="39.1" height="17" fill="url(#e_g)"/><g class="pop"><rect x="254.2" y="28.1" width="100" height="86.5" rx="9" fill="#fff"/><rect x="254.2" y="38.3" width="100" height="22.500" fill="#e6e7e9"/><rect x="265.600" y="42.7" width="13.500" height="13.500" rx="2.600" fill="#0046c4"/><rect x="265.600" y="64.500" width="13.500" height="13.500" rx="2.600" fill="#f87cd8"/><rect x="265.600" y="86.800" width="13.500" height="13.500" rx="2.600" fill="#6a5cf6"/><text x="291.6" y="54.4" font-size="14.500" fill="#111" textLength="34.500" lengthAdjust="spacingAndGlyphs">Noun</text><text x="291.600" y="76.200" font-size="14.500" fill="#111" textLength="29.500" lengthAdjust="spacingAndGlyphs">Verb</text><text x="291.600" y="98.500" font-size="14.500" fill="#111" textLength="20.500" lengthAdjust="spacingAndGlyphs">Adj</text></g></svg>
<span class="ttl" style="letter-spacing:0.36px;">Named Entity Recognition</span>
<span class="dsc" style="letter-spacing:0.57px;top:267px">Extract information from text</span>
<div class="tags"><span class="tag" style="width:44px"><span style="letter-spacing:0.22px;">Text</span></span><span class="tag" style="width:172px"><span style="letter-spacing:0.09px;">Named Entity Recognition</span></span></div>
</div>
<!-- CARD 6 -->
<div class="card" style="left:545px;top:785px">
<svg class="ill" viewBox="0 0 375 210" preserveAspectRatio="none"><rect width="375" height="210" fill="#000"/><defs><linearGradient id="f_bd" gradientUnits="userSpaceOnUse" x1="70" y1="150" x2="150" y2="55"><stop offset="0" stop-color="#000a54"/><stop offset="0.35" stop-color="#001478"/><stop offset="0.75" stop-color="#0032b8"/><stop offset="1" stop-color="#0040c8"/></linearGradient><linearGradient id="f_p1" gradientUnits="userSpaceOnUse" x1="0" y1="132" x2="0" y2="210"><stop offset="0" stop-color="#0a46c8"/><stop offset="0.3" stop-color="#2a50d0"/><stop offset="0.55" stop-color="#8a60d8"/><stop offset="0.78" stop-color="#f070d8"/><stop offset="1" stop-color="#fa7cda"/></linearGradient><linearGradient id="f_p2" gradientUnits="userSpaceOnUse" x1="0" y1="132" x2="0" y2="210"><stop offset="0" stop-color="#001a80"/><stop offset="0.4" stop-color="#002a9c"/><stop offset="1" stop-color="#0044c6"/></linearGradient><radialGradient id="f_bl" gradientUnits="userSpaceOnUse" cx="46.5" cy="96" r="24"><stop offset="0" stop-color="#f6e264"/><stop offset="0.3" stop-color="#eede60"/><stop offset="0.62" stop-color="#62c258"/><stop offset="0.85" stop-color="#14a650"/><stop offset="1" stop-color="#10a24e"/></radialGradient><radialGradient id="f_bl2" gradientUnits="userSpaceOnUse" cx="232.7" cy="111.6" r="24"><stop offset="0" stop-color="#f6e264"/><stop offset="0.3" stop-color="#eede60"/><stop offset="0.62" stop-color="#62c258"/><stop offset="0.85" stop-color="#14a650"/><stop offset="1" stop-color="#10a24e"/></radialGradient></defs><g transform="translate(0,0)"><rect x="121.250" y="130" width="6.800" height="80" fill="url(#f_p1)"/><rect x="128" y="130" width="6.800" height="80" fill="url(#f_p2)"/><path d="M59.8,159.8 L62,162.800 L155.2,119.2 L155.2,40 L152.9,38.3 L152.9,117.5 Z" fill="#0a3cc0"/><path d="M59.8,80.6 L152.9,38.3 L152.9,117.5 L59.8,159.8 Z" fill="url(#f_bd)"/><path d="M82.3,99 L127.9,79.2 L127.9,116.7 L82.3,137.5 Z" fill="none" stroke="#16eaff" stroke-width="1"/></g><g transform="translate(169.6,0)"><rect x="121.250" y="130" width="6.800" height="80" fill="url(#f_p1)"/><rect x="128" y="130" width="6.800" height="80" fill="url(#f_p2)"/><path d="M59.8,159.8 L62,162.800 L155.2,119.2 L155.2,40 L152.9,38.3 L152.9,117.5 Z" fill="#0a3cc0"/><path d="M59.8,80.6 L152.9,38.3 L152.9,117.5 L59.8,159.8 Z" fill="url(#f_bd)"/><path d="M82.3,99 L127.9,79.2 L127.9,116.7 L82.3,137.5 Z" fill="none" stroke="#16eaff" stroke-width="1"/></g><rect x="187" y="14" width="1.200" height="183" fill="#2c2c2c"/><g transform="translate(0,0)"><ellipse cx="82.700" cy="125.6" rx="19.800" ry="6.500" fill="none" stroke="#f87cd8" stroke-width="2.300"/><path d="M104.2,126.5 L109.800,125.4 L109.800,133.800 L104.2,135.800 Z" fill="#f87cd8"/></g><circle cx="51.700" cy="101.5" r="13.600" fill="url(#f_bl)"/><rect x="29.700" y="79.700" width="44.400" height="43.800" fill="none" stroke="#f0dc5c" stroke-width="1"/><g transform="translate(169.6,0)"><ellipse cx="82.700" cy="125.6" rx="19.800" ry="6.500" fill="none" stroke="#f87cd8" stroke-width="2.300"/><path d="M104.2,126.5 L109.800,125.4 L109.800,133.800 L104.2,135.800 Z" fill="#f87cd8"/></g><circle cx="237.9" cy="117.1" r="13.600" fill="url(#f_bl2)"/><rect x="216.100" y="95.300" width="44.400" height="43.800" fill="none" stroke="#f0dc5c" stroke-width="1"/></svg>
<span class="ttl" style="letter-spacing:0.49px;">Video Object Detection</span>
<span class="dsc" style="letter-spacing:0.47px;top:267px">Draw a box to track an object in a video</span>
<div class="tags"><span class="tag" style="width:52.6px"><span style="letter-spacing:0.12px;">Video</span></span><span class="tag" style="width:156.3px"><span style="letter-spacing:0.17px;">Object Event Detection</span></span></div>
</div>
<!-- CARD 7 -->
<div class="card" style="left:950px;top:785px">
<svg class="ill" viewBox="0 0 375 210" preserveAspectRatio="none"><rect width="375" height="210" fill="#000"/><defs><linearGradient id="g_e1" gradientUnits="userSpaceOnUse" x1="66" y1="20" x2="50" y2="80"><stop offset="0" stop-color="#0a3ebc"/><stop offset="0.35" stop-color="#1646c8"/><stop offset="0.75" stop-color="#6a58f0"/><stop offset="1" stop-color="#a86af8"/></linearGradient><linearGradient id="g_e2" gradientUnits="userSpaceOnUse" x1="152" y1="30" x2="128" y2="76"><stop offset="0" stop-color="#7c62f8"/><stop offset="0.3" stop-color="#6a5cf4"/><stop offset="0.7" stop-color="#1448c8"/><stop offset="1" stop-color="#0a40c0"/></linearGradient><linearGradient id="g_hd" gradientUnits="userSpaceOnUse" x1="70" y1="100" x2="136" y2="92"><stop offset="0" stop-color="#0a44c4"/><stop offset="0.3" stop-color="#1a4acc"/><stop offset="0.75" stop-color="#6a5cf2"/><stop offset="1" stop-color="#7e62fa"/></linearGradient><linearGradient id="g_bd" gradientUnits="userSpaceOnUse" x1="85" y1="150" x2="199" y2="180"><stop offset="0" stop-color="#0a44c4"/><stop offset="0.3" stop-color="#1648ca"/><stop offset="0.75" stop-color="#665af0"/><stop offset="1" stop-color="#7e62fa"/></linearGradient><linearGradient id="g_cl" gradientUnits="userSpaceOnUse" x1="77.6" y1="0" x2="123.6" y2="0"><stop offset="0" stop-color="#0ca44e"/><stop offset="0.25" stop-color="#22ac52"/><stop offset="0.75" stop-color="#f2e062"/><stop offset="1" stop-color="#f2e062"/></linearGradient><linearGradient id="g_lg" gradientUnits="userSpaceOnUse" x1="0" y1="196" x2="0" y2="210"><stop offset="0" stop-color="#0a1c84"/><stop offset="1" stop-color="#6c54e6"/></linearGradient></defs><path d="M71.5,11 Q75,9.500 75,14 L75,85 L66,84 C52,82 40,72 39.200,58 C38.800,50 42,45 46,40 Z" fill="url(#g_e1)"/><path d="M129.4,11 Q125.9,9.500 125.9,14 L125.9,85 L134.9,84 C148.9,82 160.9,72 161.700,58 C162.1,50 158.9,45 154.9,40 Z" fill="url(#g_e2)"/><path d="M159,123.5 A25,25 0 1 1 190.5,146.4" fill="none" stroke="#6a5cf6" stroke-width="8.6"/><path d="M89.5,195 L92.700,210 L111.4,210 L110.5,195 Z M150.750,195 L154.250,210 L180.5,210 L177,195 Z" fill="url(#g_lg)"/><path d="M77.6,137.5 L175,137.5 Q198.9,140 198.9,163 L198.9,210 L180.9,210 L177,195.750 L136.750,195.750 L136.750,210 L118.9,210 L115.4,195.750 L98,195.750 Q77.6,195.750 77.6,176 Z" fill="url(#g_bd)"/><rect x="77.6" y="126" width="46" height="11.800" fill="url(#g_cl)"/><path d="M64.1,90 C64.1,66 78,52.6 100.4,52.6 C123,52.6 136.750,66 136.750,90 L136.750,117 Q136.750,127 126.750,127 L74.1,127 Q64.1,127 64.1,117 Z" fill="url(#g_hd)"/><circle cx="79.5" cy="96.800" r="5.600" fill="#000"/><circle cx="121.9" cy="96.500" r="5.600" fill="#000"/><path d="M100.2,92 C108,92 112,98 116,102 C120,106 119.5,114 115,117 C110,120 104,118 100.5,113.5 C97,118 91,120 86,117 C81.5,114 81,106 85,102 C89,98 92,92 100.2,92 Z" fill="#fff"/><path d="M96,100.4 L105.2,100.4 Q106.4,100.5 105.7,101.6 L101.2,107.2 Q100.5,108 99.8,107.200 L95.4,101.6 Q94.8,100.5 96,100.4 Z" fill="#fa7cdc"/><g class="pop"><rect x="241" y="28.1" width="118.2" height="136" rx="9" fill="#fff"/><rect x="241" y="92.700" width="118.2" height="17.700" fill="#e6e7e9"/><path d="M249.8,43.300 L260.2,43.300 L255,48.900 Z" fill="#6a5cf6"/><text x="266" y="49.800" font-size="12.500" fill="#6a5cf6" textLength="31" lengthAdjust="spacingAndGlyphs">Small</text><rect x="259.2" y="58.300" width="11.600" height="11" rx="2" fill="#e6e7e9"/><rect x="259.2" y="76.600" width="11.600" height="11" rx="2" fill="#e6e7e9"/><rect x="259.2" y="96" width="11.600" height="11" rx="2" fill="#6a5cf6"/><text x="281.250" y="68.100" font-size="12.500" fill="#111" textLength="21.500" lengthAdjust="spacingAndGlyphs">Pug</text><text x="281.250" y="86.400" font-size="12.500" fill="#111" textLength="38" lengthAdjust="spacingAndGlyphs">Poodle</text><text x="281.250" y="105.800" font-size="12.500" fill="#111" textLength="59.500" lengthAdjust="spacingAndGlyphs">Chihuahua</text><path d="M252,120.6 L252,130.400 L257.9,125.5 Z M252,139.3 L252,149.100 L257.9,144.2 Z" fill="#111"/><text x="266" y="129.800" font-size="12.500" fill="#111" stroke="#111" stroke-width=".3" textLength="46" lengthAdjust="spacingAndGlyphs">Medium</text><text x="266" y="148.500" font-size="12.500" fill="#111" stroke="#111" stroke-width=".3" textLength="31.500" lengthAdjust="spacingAndGlyphs">Large</text></g></svg>
<span class="ttl" style="letter-spacing:0.34px;">Image Classification (Large Taxonomy)</span>
<span class="dsc" style="letter-spacing:0.42px;top:267px">Classify an image from a large list of options</span>
<div class="tags"><span class="tag" style="width:56px"><span style="letter-spacing:-0.04px;">Image</span></span><span class="tag" style="width:149.3px"><span style="letter-spacing:0.18px;">Content Classification</span></span></div>
</div>
<!-- CARD 8 -->
<div class="card" style="left:1355px;top:785px">
<svg class="ill" viewBox="0 0 375 210" preserveAspectRatio="none"><defs><filter id="h_bl" x="-10%" y="-10%" width="120%" height="120%"><feGaussianBlur stdDeviation="9"/></filter><filter id="h_b2" x="-10%" y="-10%" width="120%" height="120%"><feGaussianBlur stdDeviation="1"/></filter><clipPath id="h_wc"><path d="M97.7,-2 C90,8 87.5,16 88.1,24.5 C88.5,34 90,44 91.6,52.5 C93,62 95.5,70 96.9,77 L97.7,85.7 C93.5,90 92,94 91.6,98 C90,106 90,114 90.7,122.5 C91.5,131 93,138 96,145.2 C99.5,153 104,160 110,166.2 C115,171.5 120,176 125.7,178.4 C130,180.3 134,180.6 138,180.2 C146,179.3 155,177.5 162.5,175 C169,172.8 175,170.8 180,168 C183,166 185,163.5 187,161 L203.6,138.2 C204.5,133 204.2,128 203.6,122.5 C203,115 202.2,108 201,101.5 C199.3,93 197,85 194,77 C191,68.500 187.5,60.5 183.5,52.5 C179.5,45 175,38 169.5,31.5 C164,24 158,17 152,10.5 C148.5,6.500 145,2.500 141.5,-2 Z"/></clipPath><clipPath id="h_fc"><rect width="375" height="210"/></clipPath></defs><g clip-path="url(#h_fc)"><rect width="375" height="210" fill="#84aa76"/><g filter="url(#h_bl)"><path d="M-30,-30 L405,-30 L405,80 C370,95 330,118 290,120 C250,118 215,98 180,92 C140,84 100,86 70,76 C40,66 15,50 -30,40 Z" fill="#6a3a34"/><path d="M-30,-30 L120,-30 L110,60 C80,60 30,40 -30,30 Z" fill="#563a3e"/><path d="M205,32 C250,22 320,30 372,40 C380,70 340,98 290,100 C250,98 215,70 205,32 Z" fill="#8c4636"/><ellipse cx="265" cy="2" rx="68" ry="15" fill="#4c7654"/><ellipse cx="372" cy="8" rx="26" ry="30" fill="#b03a44"/><path d="M-30,50 C10,60 50,80 90,92 L96,150 C80,170 40,190 -30,180 Z" fill="#c8d6c6"/><path d="M-20,175 C40,195 80,175 100,160 C200,140 260,150 330,215 L-20,225 Z" fill="#86b478"/><ellipse cx="-4" cy="212" rx="22" ry="22" fill="#6a6424"/><path d="M268,108 C300,120 320,160 352,225 L318,225 C300,180 290,140 258,122 Z" fill="#34363e"/><path d="M310,120 C330,100 360,95 400,90 L400,190 C380,180 350,185 340,178 Z" fill="#a4c894"/><ellipse cx="362" cy="200" rx="22" ry="20" fill="#d4a2a2"/><ellipse cx="235" cy="150" rx="40" ry="22" fill="#9cc48e"/></g><path d="M97.7,-2 C90,8 87.5,16 88.1,24.5 C88.5,34 90,44 91.6,52.5 C93,62 95.5,70 96.9,77 L97.7,85.7 C93.5,90 92,94 91.6,98 C90,106 90,114 90.7,122.5 C91.5,131 93,138 96,145.2 C99.5,153 104,160 110,166.2 C115,171.5 120,176 125.7,178.4 C130,180.3 134,180.6 138,180.2 C146,179.3 155,177.5 162.5,175 C169,172.8 175,170.8 180,168 C183,166 185,163.5 187,161 L203.6,138.2 C204.5,133 204.2,128 203.6,122.5 C203,115 202.2,108 201,101.5 C199.3,93 197,85 194,77 C191,68.500 187.5,60.5 183.5,52.5 C179.5,45 175,38 169.5,31.5 C164,24 158,17 152,10.5 C148.5,6.500 145,2.500 141.5,-2 Z" fill="#8a3c98"/><g clip-path="url(#h_wc)" filter="url(#h_b2)" fill="none" stroke-linecap="round"><g><path d="M121.6,12.3 L132.4,9.6 L141.7,13.9 L147.8,23.1 L138.6,20 L126.3,19.3 Z" fill="#ee9cb4" stroke="#ee9cb4" stroke-width="2.600" stroke-linejoin="round"/><ellipse cx="103.1" cy="20" rx="7.700" ry="4.800" fill="#ee9cb4"/><ellipse cx="97" cy="28.5" rx="4" ry="2.800" fill="#e894b2"/><path d="M99.3,45.5 L110.8,44.7 L129.3,51.7 L127.8,54.7 L110.8,50.9 L100,48.6 Z" fill="#ee96b2" stroke="#ee96b2" stroke-width="2.600" stroke-linejoin="round"/><path d="M124.7,41.6 L138.6,36.2 L155,37.5 L149,57.1 L138.6,49.3 L126.3,45.5 Z" fill="#ee98b0" stroke="#ee98b0" stroke-width="2.600" stroke-linejoin="round"/><path d="M148,46.3 L154,37 L166.4,41.6 L178.7,58.6 L172.5,60.1 L163.3,50.9 Z" fill="#ec8eaa" stroke="#ec8eaa" stroke-width="2.600" stroke-linejoin="round"/><path d="M96.7,59.8 L107.8,65.5 L118.6,69.1 L132.4,71.2 L146.3,72.5 L154,82.5 L166.4,98.7 L178.7,117.2 L187.9,135.7 L194.9,148 L191.8,151.9 L184.9,138.8 L172.5,118 L157.1,96.4 L141.7,81 L118.6,77.1 L100,82.5 L98.2,72.5 Z" fill="#e4688e" stroke="#e4688e" stroke-width="2.600" stroke-linejoin="round"/><path d="M149.4,62.5 L160.2,70.2 L172.5,75.6 L178.7,74 L184.9,86.4 L191,104.9 L195.7,123.4 L198.7,138.8 L195.7,139.6 L190.3,123.4 L186.4,107.9 L178.7,91 L166.4,80.2 L157.1,78.6 L152.5,72.5 Z" fill="#e8708e" stroke="#e8708e" stroke-width="2.600" stroke-linejoin="round"/><path d="M108.5,97.9 L126.3,101.8 L144.8,111 L163.3,124.9 L178.7,138.8 L189.5,149.6 L186.4,155.7 L175.6,148 L160.2,135.7 L144.8,123.4 L127.8,114.1 L110.8,107.9 Z" fill="#ec7e9e" stroke="#ec7e9e" stroke-width="2.600" stroke-linejoin="round"/><path d="M93.9,94.1 L101.6,94.8 L103.1,107.9 L109.3,121.8 L123.2,135.7 L141.7,149.6 L160.2,160.4 L175.6,167.3 L172.5,171.2 L157.1,165.8 L138.6,155.7 L120.1,141.9 L104.7,126.4 L97,111 Z" fill="#e2648c" stroke="#e2648c" stroke-width="2.600" stroke-linejoin="round"/><path d="M98.5,129.5 L104.7,131.1 L117,145 L135.5,158.8 L154,168.1 L167.9,172.7 L164.8,176.6 L150.9,172.7 L132.4,164.2 L113.9,151.1 L101.6,138.8 Z" fill="#dc5c8a" stroke="#dc5c8a" stroke-width="2.600" stroke-linejoin="round"/><path d="M150,126 L170,138 L186,150 L190,158 L178,157 L160,146 L146,134 Z" fill="#f094ac" stroke="#f094ac" stroke-width="2.600" stroke-linejoin="round"/></g></g><path d="M97.7,-2 C90,8 87.5,16 88.1,24.5 C88.5,34 90,44 91.6,52.5 C93,62 95.5,70 96.9,77 L97.7,85.7 C93.5,90 92,94 91.6,98 C90,106 90,114 90.7,122.5 C91.5,131 93,138 96,145.2 C99.5,153 104,160 110,166.2 C115,171.5 120,176 125.7,178.4 C130,180.3 134,180.6 138,180.2 C146,179.3 155,177.5 162.5,175 C169,172.8 175,170.8 180,168 C183,166 185,163.5 187,161 L203.6,138.2 C204.5,133 204.2,128 203.6,122.5 C203,115 202.2,108 201,101.5 C199.3,93 197,85 194,77 C191,68.500 187.5,60.5 183.5,52.5 C179.5,45 175,38 169.5,31.5 C164,24 158,17 152,10.5 C148.5,6.500 145,2.500 141.5,-2 Z" fill="none" stroke="#e844e4" stroke-width="1.100"/><path d="M91.5,164 L110.5,171.5" stroke="#f0982e" stroke-width="11" stroke-linecap="round"/><path d="M91.5,164 L110.5,171.500" stroke="#c29a3c" stroke-width="8.600" stroke-linecap="round"/><g fill="none" stroke="#e0524a" stroke-width="1.500" stroke-linejoin="round" stroke-linecap="round"><path d="M171.2,174.500 L167.700,192.400 L152,203 L144.1,203.800 M173,175 L169.500,193.400 L153,204.500"/><path d="M183.5,171.400 L174.700,189 L162.5,206.400 M185.3,172.400 L176.500,190 L164.200,207.400"/><path d="M200,171.400 L210.600,182 L213.200,212 M201.800,170.800 L212.400,181.400 L215,212"/><path d="M204.500,170.600 L220.200,172.300 L220.200,212 M205,169 L222,170.800 L222,212"/></g><g fill="none" stroke-linecap="round"><path d="M216,134 L255.500,77.500 M219,136 L292.500,95" stroke="#2ee03e" stroke-width="5"/><path d="M216,134 L255.500,77.500 M219,136 L292.500,95" stroke="#8cc05c" stroke-width="2.600"/></g><path d="M190.500,166 L212,141 L222,150" fill="none" stroke="#f0962c" stroke-width="14.600" stroke-linecap="round" stroke-linejoin="round"/><path d="M190.500,166 L212,141 L222,150" fill="none" stroke="#b88a32" stroke-width="12.200" stroke-linecap="round" stroke-linejoin="round"/><path d="M193,162 L210,143" stroke="#d8b04a" stroke-width="3" stroke-linecap="round" opacity=".7"/><circle cx="221" cy="151" r="3" fill="#c8a040"/><ellipse cx="140" cy="211" rx="18" ry="4" fill="#b89088"/></g></svg>
<span class="ttl" style="letter-spacing:0.41px;">Bug Anatomy Segmentation</span>
<span class="dsc" style="letter-spacing:0.49px;top:267px">Segment parts of an insect</span>
<div class="tags"><span class="tag" style="width:56px"><span style="letter-spacing:-0.04px;">Image</span></span><span class="tag" style="width:160.8px"><span style="letter-spacing:0.11px;">Semantic Segmentation</span></span></div>
</div>
<!-- ROW 3 -->
<div class="card" style="left:140px;top:1190px;background:#e1dcfc"></div>
<div class="card" style="left:545px;top:1190px;background:#5a3e3e"><div class="abs" style="left:0;top:0;width:375px;height:30px;background:linear-gradient(90deg,#7a3a34 0,#80403a 14%,#c8aca4 16%,#d8c0b8 24%,#a4544a 26%,#a4544a 29.500%,#c4c4c4 30%,#c4c4c4 31%,#463c38 31.500%,#52463f 60%,#4a403c 85%,#b45c52 86%,#b45c52 88.500%,#f0dad2 89.500%,#ecd4cc 97%,#c4503e 97.500%)"></div><div class="abs" style="left:0;top:0;width:375px;height:1.500px;background:rgba(50,25,25,.5)"></div></div>
<div class="card" style="left:950px;top:1190px;background:#e2fcf8"></div>
<div class="card" style="left:1355px;top:1190px;background:#1e3e54"><div class="abs" style="left:0;top:0;width:375px;height:30px;background:linear-gradient(90deg,#1e4258 0,#2c5268 35%,#456a80 60%,#5c7e92 80%,#6a8898 100%)"></div><div class="abs" style="left:0;top:0;width:375px;height:4.500px;background:linear-gradient(90deg,#16384c 0,#1e4458 25%,#3a6074 48%,#7a98a8 60%,#b4c8d4 72%,#c4dcec 80%,#e8c8a8 83.500%,#c0dcf0 87%,#b8d4e8 100%)"></div></div>
</div>
</body>
</html>
